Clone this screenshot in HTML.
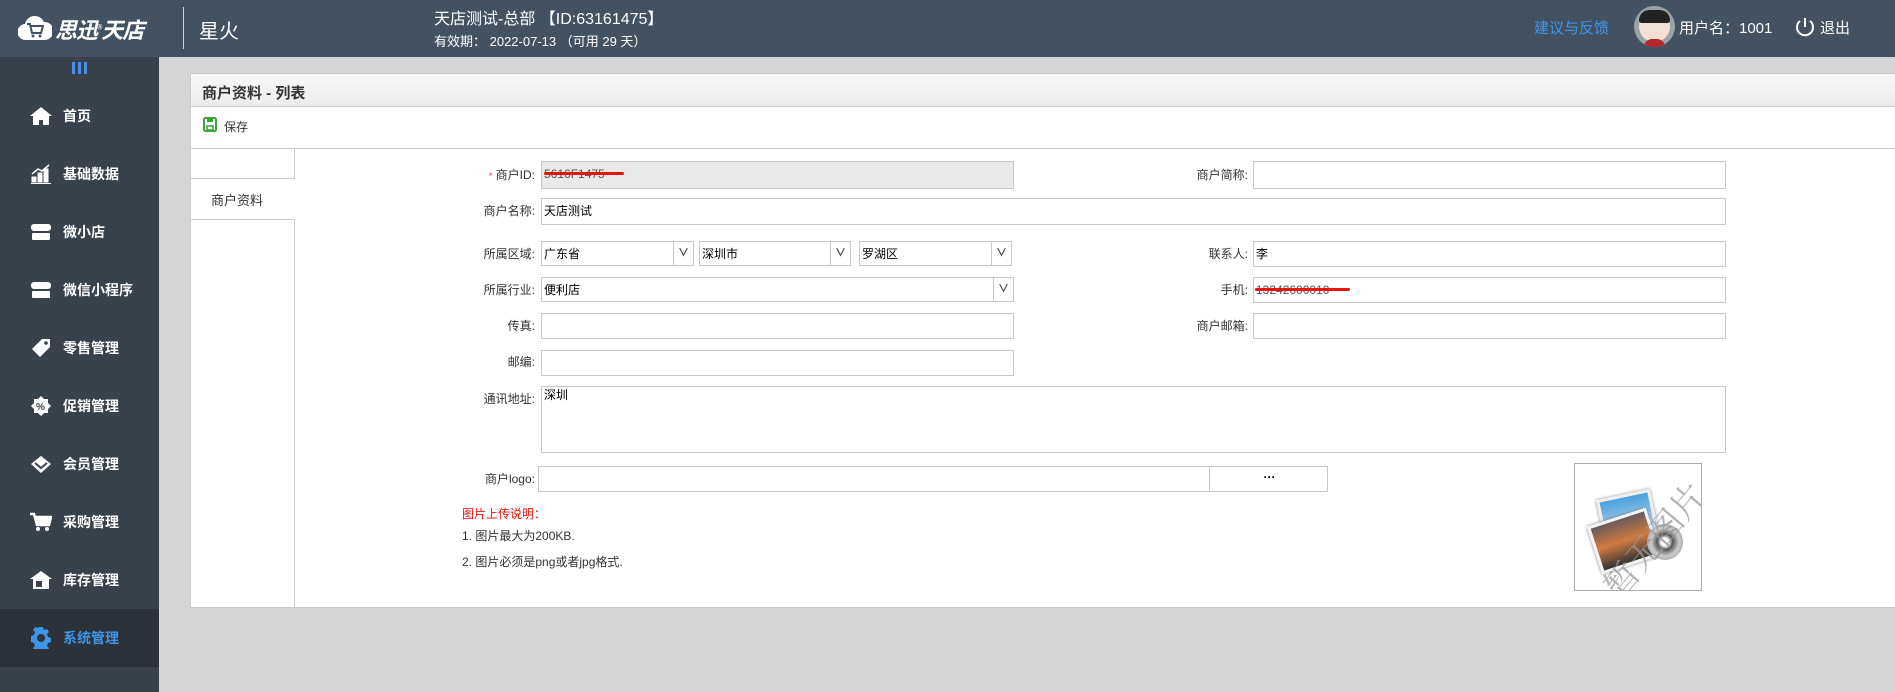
<!DOCTYPE html>
<html><head><meta charset="utf-8">
<style>
*{margin:0;padding:0;box-sizing:border-box}
body{width:1895px;height:692px;overflow:hidden;position:relative;font-family:"Liberation Sans","Noto Sans CJK SC",sans-serif;background:#d6d6d6}
.abs{position:absolute}
#hd{left:0;top:0;width:1895px;height:57px;background:#435262;color:#fff}
#sb{left:0;top:57px;width:159px;height:635px;background:#39414a}
#main{left:159px;top:57px;width:1736px;height:635px;background:#d4d4d4;background-image:repeating-linear-gradient(90deg,rgba(255,255,255,.08) 0 1px,transparent 1px 3px)}
.mi{position:absolute;left:0;width:159px;height:58px;color:#fff;font-size:14px;font-weight:bold}
.mi span{position:absolute;left:63px;top:50%;transform:translateY(-50%)}
.mi svg{position:absolute;left:30px;top:50%;transform:translateY(-50%)}
.lbl{position:absolute;font-size:12px;color:#333;text-align:right;width:120px}
.inp{position:absolute;border:1px solid #c8c8c8;background:#fff;font-size:12px;color:#000;padding-left:2px;line-height:24px}
.sel .ar{position:absolute;right:0;top:0;bottom:0;width:20px;border-left:1px solid #c8c8c8;text-align:center;font-size:11px;font-weight:bold;line-height:22px;color:#444}
</style></head><body>
<div id="hd" class="abs">
  <svg class="abs" style="left:18px;top:14px" width="34" height="28" viewBox="0 0 34 28"><path d="M8 26a8 8 0 0 1-1-16 10 10 0 0 1 19-2 8 8 0 0 1 1 18z" fill="#fff"/><path d="M9 10h3l2 9h9l2-7H13" stroke="#435262" stroke-width="2" fill="none"/><circle cx="15" cy="22" r="1.5" fill="#435262"/><circle cx="22" cy="22" r="1.5" fill="#435262"/></svg>
  <div class="abs" style="left:55px;top:13px;font-size:22px;font-weight:bold;font-style:italic;letter-spacing:-1px">思迅<sup style="font-size:7px">®</sup>天店</div>
  <div class="abs" style="left:183px;top:7px;width:1px;height:42px;background:#c9d0d6"></div>
  <div class="abs" style="left:199px;top:15px;font-size:20px">星火</div>
  <div class="abs" style="left:434px;top:5px;font-size:16px">天店测试-总部 【ID:63161475】</div>
  <div class="abs" style="left:434px;top:31px;font-size:13px">有效期： 2022-07-13 （可用 29 天）</div>
  <div class="abs" style="left:1534px;top:17px;font-size:15px;color:#3f95e8">建议与反馈</div>
  <div class="abs" style="left:1634px;top:6px;width:41px;height:41px;border-radius:50%;background:#9aa3a8;overflow:hidden">
    <div class="abs" style="left:5px;top:5px;width:31px;height:31px;border-radius:50%;background:#f3e1d3"></div>
    <div class="abs" style="left:5px;top:4px;width:31px;height:13px;border-radius:15px 15px 4px 4px;background:#222"></div>
    <div class="abs" style="left:10px;top:33px;width:21px;height:10px;border-radius:8px 8px 0 0;background:#b8262a"></div>
  </div>
  <div class="abs" style="left:1679px;top:17px;font-size:15px">用户名：1001</div>
  <svg class="abs" style="left:1794px;top:16px" width="22" height="22" viewBox="0 0 22 22"><path d="M6 5a8 8 0 1 0 10 0" stroke="#fff" stroke-width="2" fill="none"/><path d="M11 2v9" stroke="#fff" stroke-width="2"/></svg>
  <div class="abs" style="left:1820px;top:17px;font-size:15px">退出</div>
</div>

<div id="sb" class="abs">
  <div class="abs" style="left:72px;top:5px;width:15px;height:12px;background:repeating-linear-gradient(90deg,#4a90e2 0 3px,transparent 3px 6px)"></div>
  <div class="mi" style="top:30px"><svg width="22" height="20" viewBox="0 0 22 20"><path d="M11 1L0 10h3v9h6v-5h4v5h6v-9h3z" fill="#fff"/></svg><span>首页</span></div>
  <div class="mi" style="top:88px"><svg width="22" height="20" viewBox="0 0 22 20"><path d="M2 18h4v-5H2zM8 18h4V9H8zM14 18h4V5h-4zM1 19.5h20" fill="#fff" stroke="#fff"/><path d="M2 10l6-5 4 2 7-6" stroke="#fff" stroke-width="1.5" fill="none"/></svg><span>基础数据</span></div>
  <div class="mi" style="top:146px"><svg width="22" height="20" viewBox="0 0 22 20"><rect x="1" y="2" width="20" height="7" rx="3" fill="#fff"/><rect x="2" y="11" width="18" height="7" rx="1" fill="#fff"/></svg><span>微小店</span></div>
  <div class="mi" style="top:204px"><svg width="22" height="20" viewBox="0 0 22 20"><rect x="1" y="2" width="20" height="7" rx="3" fill="#fff"/><rect x="2" y="11" width="18" height="7" rx="1" fill="#fff"/></svg><span>微信小程序</span></div>
  <div class="mi" style="top:262px"><svg width="22" height="20" viewBox="0 0 22 20"><path d="M12 1h8v8L10 19 2 11z" fill="#fff"/><circle cx="16" cy="5" r="1.8" fill="#39414a"/></svg><span>零售管理</span></div>
  <div class="mi" style="top:320px"><svg width="22" height="20" viewBox="0 0 22 20"><path d="M11 0l3 3h4v4l3 3-3 3v4h-4l-3 3-3-3H4v-4l-3-3 3-3V3h4z" fill="#fff"/><text x="6" y="14" font-size="10" fill="#39414a" font-weight="bold">%</text></svg><span>促销管理</span></div>
  <div class="mi" style="top:378px"><svg width="22" height="20" viewBox="0 0 22 20"><path d="M11 2L1 10l10 9 10-9z" fill="#fff"/><path d="M5 9l6 5 6-5" stroke="#39414a" stroke-width="2" fill="none"/></svg><span>会员管理</span></div>
  <div class="mi" style="top:436px"><svg width="22" height="20" viewBox="0 0 22 20"><path d="M0 2h4l3 11h12l2-8H6" stroke="#fff" stroke-width="2.5" fill="none"/><rect x="6" y="6" width="14" height="6" fill="#fff"/><circle cx="8" cy="17" r="2" fill="#fff"/><circle cx="17" cy="17" r="2" fill="#fff"/></svg><span>采购管理</span></div>
  <div class="mi" style="top:494px"><svg width="22" height="20" viewBox="0 0 22 20"><path d="M11 1L0 9h3v10h16V9h3z" fill="#fff"/><rect x="6" y="11" width="6" height="6" fill="#39414a"/></svg><span>库存管理</span></div>
  <div class="mi" style="top:552px;background:#2b323a;color:#3f95e8"><svg width="22" height="22" viewBox="0 0 22 22"><path d="M9 0h4l1 3 3-1 2 3-2 2 1 3 3 1v4l-3 1-1 3 2 2-2 3-3-1-1 3H9l-1-3-3 1-2-3 2-2-1-3-3-1V9l3-1 1-3-2-2 2-3 3 1z" fill="#3f95e8"/><circle cx="11" cy="11" r="4" fill="#2b323a"/></svg><span>系统管理</span></div>
</div>

<div id="main" class="abs"></div>

<div class="abs" style="left:190px;top:73px;width:1705px;height:535px;background:#fff;border:1px solid #c8c8c8;border-right:none">
  <div class="abs" style="left:0;top:0;width:100%;height:33px;background:linear-gradient(#f8f8f8,#ececec);border-bottom:1px solid #ccc"></div>
  <div class="abs" style="left:11px;top:8px;font-size:15px;font-weight:bold;color:#333">商户资料 - 列表</div>
  <svg class="abs" style="left:12px;top:43px" width="14" height="15" viewBox="0 0 14 15"><rect x="1" y="1" width="12" height="13" rx="1.5" fill="none" stroke="#3aa33a" stroke-width="2"/><rect x="4" y="1" width="6" height="4" fill="#3aa33a"/><rect x="4" y="9" width="6" height="4" fill="none" stroke="#3aa33a" stroke-width="1.5"/></svg>
  <div class="abs" style="left:33px;top:44px;font-size:12px;color:#333">保存</div>
  <div class="abs" style="left:0;top:74px;width:100%;height:1px;background:#ccc"></div>
  <div class="abs" style="left:103px;top:75px;width:1px;height:460px;background:#ccc"></div>
  <div class="abs" style="left:0;top:104px;width:104px;height:42px;background:#fff;border-top:1px solid #ccc;border-bottom:1px solid #ccc"></div>
  <div class="abs" style="left:20px;top:116px;font-size:13px;color:#333">商户资料</div>
</div>

<div class="lbl" style="left:415px;top:166px"><span style="color:#e33;font-size:9px">*</span> 商户ID:</div>
<div class="inp" style="left:541px;top:161px;width:473px;height:28px;background:#e9e9e9;color:#555">5616F1475</div>
<div class="abs" style="left:544px;top:172px;width:80px;height:3px;background:#e8150d;border-radius:2px"></div>
<div class="lbl" style="left:1128px;top:166px">商户简称:</div>
<div class="inp" style="left:1253px;top:161px;width:473px;height:28px"></div>

<div class="lbl" style="left:415px;top:202px">商户名称:</div>
<div class="inp" style="left:541px;top:198px;width:1185px;height:27px">天店测试</div>

<div class="lbl" style="left:415px;top:245px">所属区域:</div>
<div class="inp sel" style="left:541px;top:241px;width:153px;height:25px">广东省<div class="ar">∨</div></div>
<div class="inp sel" style="left:699px;top:241px;width:152px;height:25px">深圳市<div class="ar">∨</div></div>
<div class="inp sel" style="left:859px;top:241px;width:153px;height:25px">罗湖区<div class="ar">∨</div></div>
<div class="lbl" style="left:1128px;top:245px">联系人:</div>
<div class="inp" style="left:1253px;top:241px;width:473px;height:26px">李</div>

<div class="lbl" style="left:415px;top:281px">所属行业:</div>
<div class="inp sel" style="left:541px;top:277px;width:473px;height:25px">便利店<div class="ar">∨</div></div>
<div class="lbl" style="left:1128px;top:281px">手机:</div>
<div class="inp" style="left:1253px;top:277px;width:473px;height:26px;color:#555">13242600010</div>
<div class="abs" style="left:1255px;top:288px;width:95px;height:3px;background:#e8150d;border-radius:2px"></div>

<div class="lbl" style="left:415px;top:317px">传真:</div>
<div class="inp" style="left:541px;top:313px;width:473px;height:26px"></div>
<div class="lbl" style="left:1128px;top:317px">商户邮箱:</div>
<div class="inp" style="left:1253px;top:313px;width:473px;height:26px"></div>

<div class="lbl" style="left:415px;top:353px">邮编:</div>
<div class="inp" style="left:541px;top:350px;width:473px;height:26px"></div>

<div class="lbl" style="left:415px;top:390px">通讯地址:</div>
<div class="inp" style="left:541px;top:386px;width:1185px;height:67px;line-height:16px">深圳</div>

<div class="lbl" style="left:415px;top:470px">商户logo:</div>
<div class="inp" style="left:538px;top:466px;width:672px;height:26px"></div>
<div class="inp" style="left:1209px;top:466px;width:119px;height:26px;text-align:center;font-weight:bold;line-height:20px">···</div>

<div class="abs" style="left:1574px;top:463px;width:128px;height:128px;border:1px solid #aaa;background:#fff;overflow:hidden">
  <div class="abs" style="left:25px;top:30px;width:55px;height:45px;background:linear-gradient(#4aa0dd,#cde);border:3px solid #eee;transform:rotate(-12deg);box-shadow:0 0 3px #888"></div>
  <div class="abs" style="left:18px;top:52px;width:62px;height:50px;background:linear-gradient(#6a5a5a,#d07a40 50%,#333);border:3px solid #f4f4f4;transform:rotate(-18deg);box-shadow:0 0 3px #777"></div>
  <div class="abs" style="left:72px;top:60px;width:36px;height:36px;border-radius:50%;background:radial-gradient(#fff 15%,#555 30%,#ccc 55%,#777);"></div>
  <div class="abs" style="left:10px;top:50px;font-size:34px;color:#999;transform:rotate(-50deg);opacity:.75;white-space:nowrap;font-family:'Noto Serif CJK SC',serif">暂无图片</div>
</div>

<div class="abs" style="left:462px;top:505px;font-size:12px;color:#e8150d">图片上传说明：</div>
<div class="abs" style="left:462px;top:527px;font-size:12px;color:#333">1. 图片最大为200KB.</div>
<div class="abs" style="left:462px;top:553px;font-size:12px;color:#333">2. 图片必须是png或者jpg格式.</div>
</body></html>
